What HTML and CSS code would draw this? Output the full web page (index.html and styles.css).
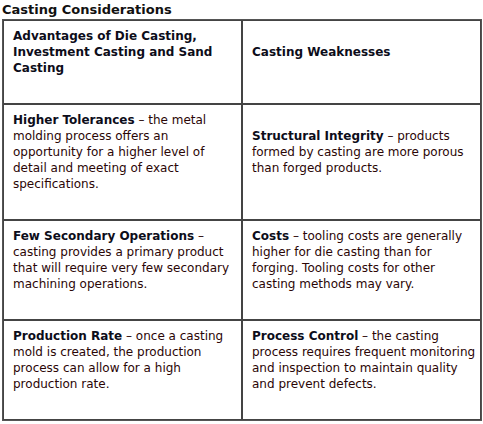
FILE: index.html
```html
<!DOCTYPE html>
<html>
<head>
<meta charset="utf-8">
<link rel="stylesheet" href="styles.css">
</head>
<body>
<h2 class="title">Casting Considerations</h2>
<table class="grid">
  <tr>
    <td><p><strong>Advantages of Die Casting,<br>Investment Casting and Sand<br>Casting</strong></p></td>
    <td><p><strong>Casting Weaknesses</strong></p></td>
  </tr>
  <tr>
    <td><p><strong>Higher Tolerances</strong> – the metal<br>molding process offers an<br>opportunity for a higher level of<br>detail and meeting of exact<br>specifications.</p></td>
    <td><p><strong>Structural Integrity</strong> – products<br>formed by casting are more porous<br>than forged products.</p></td>
  </tr>
  <tr>
    <td><p><strong>Few Secondary Operations</strong> –<br>casting provides a primary product<br>that will require very few secondary<br>machining operations.</p></td>
    <td><p><strong>Costs</strong> – tooling costs are generally<br>higher for die casting than for<br>forging. Tooling costs for other<br>casting methods may vary.</p></td>
  </tr>
  <tr>
    <td><p><strong>Production Rate</strong> – once a casting<br>mold is created, the production<br>process can allow for a high<br>production rate.</p></td>
    <td><p><strong>Process Control</strong> – the casting<br>process requires frequent monitoring<br>and inspection to maintain quality<br>and prevent defects.</p></td>
  </tr>
</table>
</body>
</html>
```
FILE: styles.css
```css
html, body {
  margin: 0;
  padding: 0;
  background: #fff;
}
body {
  padding: 0 1px 0 2px;
  font-family: "DejaVu Sans", Verdana, sans-serif;
  font-size: 12px;
  line-height: 16px;
  color: #2b0606;
}
.title {
  margin: 0;
  font-size: 13px;
  line-height: 19px;
  height: 19px;
  color: #111;
  font-weight: bold;
}
.grid {
  width: 480px;
  border-collapse: separate;
  border-spacing: 0;
  border: 1px solid #555;
  table-layout: fixed;
}
.grid td {
  width: 50%;
  border: 1px solid #444;
  padding: 7px 2px 7px 9px;
  vertical-align: middle;
}
.grid p {
  margin: 0 0 20px 0;
  white-space: nowrap;
}
.grid strong {
  color: #0d0d1a;
}
```
